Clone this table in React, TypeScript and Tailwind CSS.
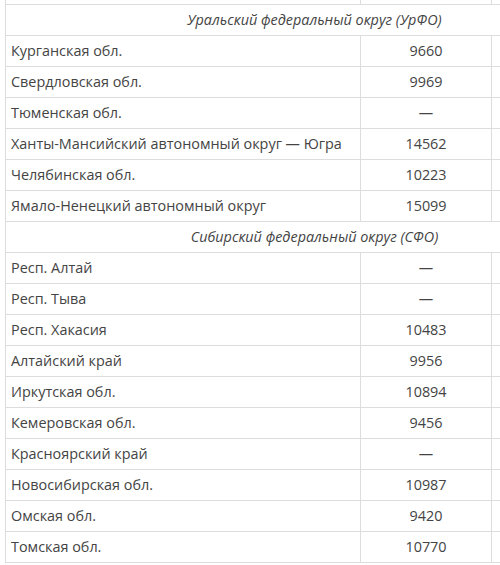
import React from 'react';

type Row = { name: string; value: string };

const ural: Row[] = [
  { name: 'Курганская обл.', value: '9660' },
  { name: 'Свердловская обл.', value: '9969' },
  { name: 'Тюменская обл.', value: '—' },
  { name: 'Ханты-Мансийский автономный округ — Югра', value: '14562' },
  { name: 'Челябинская обл.', value: '10223' },
  { name: 'Ямало-Ненецкий автономный округ', value: '15099' },
];

const siberia: Row[] = [
  { name: 'Респ. Алтай', value: '—' },
  { name: 'Респ. Тыва', value: '—' },
  { name: 'Респ. Хакасия', value: '10483' },
  { name: 'Алтайский край', value: '9956' },
  { name: 'Иркутская обл.', value: '10894' },
  { name: 'Кемеровская обл.', value: '9456' },
  { name: 'Красноярский край', value: '—' },
  { name: 'Новосибирская обл.', value: '10987' },
  { name: 'Омская обл.', value: '9420' },
  { name: 'Томская обл.', value: '10770' },
];

const cell = 'border border-[#dddddd] h-[31px] px-[5px] py-0 align-middle';

const Group: React.FC<{ title: string; rows: Row[] }> = ({ title, rows }) => (
  <>
    <tr>
      <td colSpan={3} className={`${cell} text-center italic`}>
        {title}
      </td>
    </tr>
    {rows.map((r) => (
      <tr key={r.name}>
        <td className={cell}>{r.name}</td>
        <td className={`${cell} text-center`}>{r.value}</td>
        <td className={cell}></td>
      </tr>
    ))}
  </>
);

export default function App() {
  return (
    <div className="w-[500px] h-[565px] overflow-hidden bg-white">
      <div className="pl-[5px]">
        <table
          className="border-collapse w-[618px] table-fixed text-[14.4px] leading-[20px] text-[#444444]"
          style={{ fontFamily: '"Open Sans", "Noto Sans", sans-serif' }}
        >
          <colgroup>
            <col className="w-[355px]" />
            <col className="w-[131px]" />
            <col className="w-[132px]" />
          </colgroup>
          <tbody>
            <tr>
              <td className="border-x border-b border-[#dddddd] h-[4px] p-0"></td>
              <td className="border-x border-b border-[#dddddd] h-[4px] p-0"></td>
              <td className="border-x border-b border-[#dddddd] h-[4px] p-0"></td>
            </tr>
            <Group title="Уральский федеральный округ (УрФО)" rows={ural} />
            <Group title="Сибирский федеральный округ (СФО)" rows={siberia} />
          </tbody>
        </table>
      </div>
    </div>
  );
}
